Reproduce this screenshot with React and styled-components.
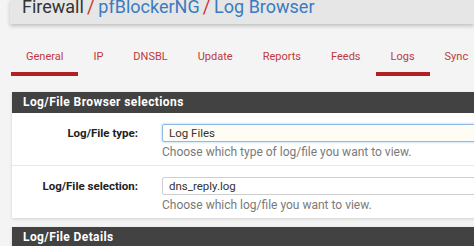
import React from 'react'
import styled, { createGlobalStyle } from 'styled-components'

const Global = createGlobalStyle`
    html, body {
        margin:0;
        padding:0;
        background:#f4f4f4;
        font-family:Roboto, "Liberation Sans", sans-serif;
        overflow:hidden;
    }
`
const Page = styled.div`
    width:474px;
    height:246px;
    overflow:hidden;
`
const Crumbs = styled.div`
    margin-left:10px;
    height:24px;
    background:#e6e6e6;
    box-shadow:0 2px 4px rgba(0,0,0,0.22);
    overflow:hidden;
    padding-left:12px;
`
const CrumbTitle = styled.h1`
    margin:-2px 0 0 0;
    font-size:18px;
    line-height:18px;
    font-weight:400;
    color:#333;
    white-space:nowrap;
`
const CrumbLink = styled.span`
    color:#3a7bbf;
`
const Slash = styled.span`
    color:#c9302c;
    margin:0 4px 0 3px;
`
const Tabs = styled.ul`
    list-style:none;
    margin:26px 0 0 11px;
    padding:0;
    display:flex;
`
const Tab = styled.li`
    padding:0 15px 8px;
    font-size:11px;
    line-height:14px;
    color:#c0393b;
    border-bottom:4px solid ${props => props.active ? '#b21f24' : 'transparent'};
    white-space:nowrap;
`
const Panel = styled.section`
    margin:${props => props.top}px -30px 0 12px;
    background:#fff;
    box-shadow:0 1px 3px rgba(0,0,0,0.15);
`
const PanelHeading = styled.h2`
    margin:0;
    height:21px;
    line-height:21px;
    padding-left:11px;
    background:#424242;
    color:#fff;
    font-size:12px;
    font-weight:700;
    letter-spacing:0.4px;
`
const Row = styled.div`
    display:grid;
    grid-template-columns:126px 1fr;
    column-gap:24px;
    padding:11px 0 6px;
    border-bottom:${props => props.last ? 'none' : '1px solid #e8e8e8'};
`
const Label = styled.label`
    grid-row:1;
    text-align:right;
    font-size:11.5px;
    font-weight:700;
    color:#222;
    align-self:center;
`
const Input = styled.div`
    grid-row:1;
    height:18px;
    box-sizing:border-box;
    border:1px solid ${props => props.focused ? '#8fbbe3' : '#cfcfcf'};
    box-shadow:${props => props.focused ? '0 0 3px rgba(102,175,233,0.6)' : 'none'};
    background:${props => props.focused ? '#fffdf3' : '#fff'};
    border-radius:2px;
    padding-left:6px;
    font-size:11.5px;
    line-height:16px;
    color:#333;
`
const Help = styled.div`
    grid-column:2;
    margin-top:3px;
    font-size:12px;
    line-height:14px;
    color:#7a7a7a;
    white-space:nowrap;
`

const tabs = ['General', 'IP', 'DNSBL', 'Update', 'Reports', 'Feeds', 'Logs', 'Sync']

const App = () => {
  return (
    <Page>
        <Global/>
        <Crumbs>
            <CrumbTitle>
                Firewall<Slash>/</Slash><CrumbLink>pfBlockerNG</CrumbLink><Slash>/</Slash><CrumbLink>Log Browser</CrumbLink>
            </CrumbTitle>
        </Crumbs>
        <Tabs>
            {tabs.map(t => (
                <Tab key={t} active={t === 'General' || t === 'Logs'}>{t}</Tab>
            ))}
        </Tabs>
        <Panel top={16}>
            <PanelHeading>Log/File Browser selections</PanelHeading>
            <Row>
                <Label>Log/File type:</Label>
                <Input focused>Log Files</Input>
                <Help>Choose which type of log/file you want to view.</Help>
            </Row>
            <Row last>
                <Label>Log/File selection:</Label>
                <Input>dns_reply.log</Input>
                <Help>Choose which log/file you want to view.</Help>
            </Row>
        </Panel>
        <Panel top={9}>
            <PanelHeading>Log/File Details</PanelHeading>
        </Panel>
    </Page>
  )
}

export default App
